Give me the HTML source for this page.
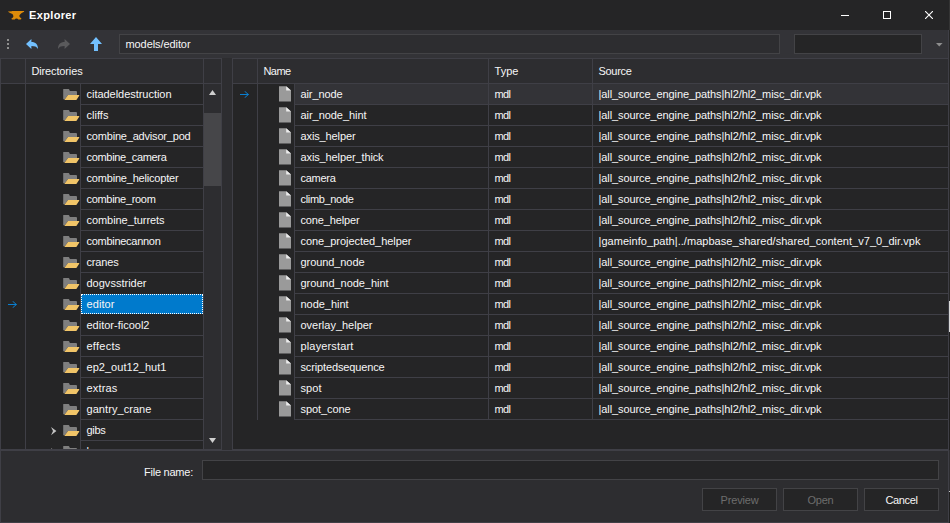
<!DOCTYPE html><html><head><meta charset="utf-8"><title>Explorer</title><style>
*{box-sizing:border-box;margin:0;padding:0}
html,body{width:950px;height:523px;overflow:hidden;background:#252526}
body{position:relative;font-family:"Liberation Sans",sans-serif;font-size:11px;color:#f6f6f6;cursor:default}
.a{position:absolute}
.t{position:absolute;white-space:nowrap;line-height:13px;height:13px}
#title{left:0;top:0;width:949px;height:30px;background:#252526}
#toolbar{left:0;top:30px;width:949px;height:28px;background:#333337}
.inp{position:absolute;border:1px solid #434346;background:#252526}
#tree{left:0;top:58px;width:222px;height:392px;background:#252526;border:1px solid #3f3f46;overflow:hidden}
#grid{left:232px;top:58px;width:717px;height:392px;background:#252526;border:1px solid #3f3f46;overflow:hidden}
#split{left:222px;top:58px;width:10px;height:392px;background:#2d2d30}
.hdr{position:absolute;top:0;height:25px;background:#2d2d30;border-bottom:1px solid #3f3f46;border-right:1px solid #3f3f46}
.hl{position:absolute;height:1px;background:#3f3f46}
.vl{position:absolute;width:1px;background:#3f3f46}
#panel{left:0;top:450px;width:949px;height:73px;background:#2d2d30;border:1px solid #3f3f46}
.btn{position:absolute;top:488px;width:75px;height:23px;border:1px solid #434346;background:#252526;text-align:center;line-height:20px;padding-top:1px}
.dis{color:#6d6d6d}
</style></head><body>
<div id="title" class="a">
<svg class="a" style="left:8px;top:10px" width="17" height="10" viewBox="0 0 17 10"><path transform="translate(0 0.75) scale(1 0.92)" d="M0 1.2L0.2 0.7L3.9 0.6V0.4H16.1V1.1C14 2.2 12.4 3.4 11.5 4.8C11.2 5.6 11.5 6.6 12.2 7.3L13.3 8.2V9L12.5 9.5H10.3L9.6 8.8Q8.4 8 7.4 8.8L6.8 9.5H4L3.3 8.8L4.6 7.6C5.4 6.8 5.6 6 5.2 5.2L4.5 3.6C2.8 3 1.2 2.2 0 1.2Z" fill="#de8c0a"/></svg>
<div class="t" style="left:29px;top:9px;font-weight:bold;color:#fff;letter-spacing:0.35px">Explorer</div>
<div class="a" style="left:841px;top:15px;width:8px;height:1px;background:#fff"></div>
<div class="a" style="left:883px;top:11px;width:8px;height:8px;border:1px solid #fff"></div>
<svg class="a" style="left:925px;top:11px" width="8" height="8" viewBox="0 0 8 8"><path d="M0 0L8 8M8 0L0 8" stroke="#fff" stroke-width="1.1" fill="none"/></svg>
</div>
<div id="toolbar" class="a">
<div class="a" style="left:7px;top:9px;width:2px;height:2px;background:#8f8f8f"></div>
<div class="a" style="left:7px;top:13px;width:2px;height:2px;background:#8f8f8f"></div>
<div class="a" style="left:7px;top:17px;width:2px;height:2px;background:#8f8f8f"></div>
<svg class="a" style="left:26px;top:9px" width="12" height="10" viewBox="0 0 12 10"><path d="M0 5L5.4 0V3C9.6 3 12 5.6 12 10C10.6 7.6 8.6 7 5.4 7V10Z" fill="#72c0ff"/></svg>
<svg class="a" style="left:58px;top:9px" width="12" height="10" viewBox="0 0 12 10"><path transform="translate(12 0) scale(-1 1)" d="M0 5L5.4 0V3C9.6 3 12 5.6 12 10C10.6 7.6 8.6 7 5.4 7V10Z" fill="#5a5a5c"/></svg>
<svg class="a" style="left:90px;top:7px" width="12" height="14" viewBox="0 0 12 14"><path d="M6 0L12 7H8V14H4V7H0Z" fill="#72c0ff"/></svg>
<div class="inp" style="left:119px;top:4px;width:661px;height:20px;background:#2d2d30"></div>
<div class="t" style="left:125.5px;top:8px;letter-spacing:-0.081px">models/editor</div>
<div class="inp" style="left:794px;top:4px;width:128px;height:20px"></div>
<svg class="a" style="left:936px;top:13px" width="7" height="4" viewBox="0 0 7 4"><path d="M0 0H6.6L3.3 3.4Z" fill="#8e8e8e"/></svg>
</div>
<div id="split" class="a"></div>
<div id="tree" class="a">
<div class="hdr" style="left:-1px;width:26px"></div>
<div class="hdr" style="left:25px;width:178px"></div>
<div class="hdr" style="left:203px;width:18px;border-right:0"></div>
<div class="t" style="left:30.5px;top:6px;letter-spacing:-0.143px">Directories</div>
<div class="vl" style="left:24px;top:25px;height:370px"></div>
<div class="vl" style="left:79px;top:25px;height:370px"></div>
<div class="vl" style="left:202px;top:25px;height:370px"></div>
<div class="a" style="left:203px;top:25px;width:17px;height:370px;background:#2d2d30"></div>
<div class="a" style="left:203px;top:54px;width:17px;height:73px;background:#464649"></div>
<svg class="a" style="left:208px;top:31px" width="7" height="5" viewBox="0 0 7 5"><path d="M3.5 0L7 5H0Z" fill="#cfcfcf"/></svg>
<svg class="a" style="left:208px;top:379px" width="7" height="5" viewBox="0 0 7 5"><path d="M0 0H7L3.5 5Z" fill="#cfcfcf"/></svg>
<div class="hl" style="left:80px;top:45px;width:122px"></div>
<svg class="a" style="left:62px;top:30px" width="17" height="12" viewBox="0 0 17 12"><path transform="translate(0 -0.4)" d="M0.2 0.9Q0.2 0.2 1 0.2H5Q5.8 0.2 6.2 1L6.9 2.4H13Q14 2.4 14 3.4V6.5H5L1.8 10.7H0.2Z" fill="#7f7f7f"/><path transform="translate(0 -0.4)" d="M5 6.4H15.8Q16.7 6.4 16.2 7.2L13.7 11Q13.4 11.5 12.8 11.5H1.3Z" fill="#f1c568"/></svg>
<div class="t" style="left:85.5px;top:29px;letter-spacing:-0.034px">citadeldestruction</div>
<div class="hl" style="left:80px;top:66px;width:122px"></div>
<svg class="a" style="left:62px;top:51px" width="17" height="12" viewBox="0 0 17 12"><path transform="translate(0 -0.4)" d="M0.2 0.9Q0.2 0.2 1 0.2H5Q5.8 0.2 6.2 1L6.9 2.4H13Q14 2.4 14 3.4V6.5H5L1.8 10.7H0.2Z" fill="#7f7f7f"/><path transform="translate(0 -0.4)" d="M5 6.4H15.8Q16.7 6.4 16.2 7.2L13.7 11Q13.4 11.5 12.8 11.5H1.3Z" fill="#f1c568"/></svg>
<div class="t" style="left:85.5px;top:50px;letter-spacing:0.031px">cliffs</div>
<div class="hl" style="left:80px;top:87px;width:122px"></div>
<svg class="a" style="left:62px;top:72px" width="17" height="12" viewBox="0 0 17 12"><path transform="translate(0 -0.4)" d="M0.2 0.9Q0.2 0.2 1 0.2H5Q5.8 0.2 6.2 1L6.9 2.4H13Q14 2.4 14 3.4V6.5H5L1.8 10.7H0.2Z" fill="#7f7f7f"/><path transform="translate(0 -0.4)" d="M5 6.4H15.8Q16.7 6.4 16.2 7.2L13.7 11Q13.4 11.5 12.8 11.5H1.3Z" fill="#f1c568"/></svg>
<div class="t" style="left:85.5px;top:71px;letter-spacing:-0.192px">combine_advisor_pod</div>
<div class="hl" style="left:80px;top:108px;width:122px"></div>
<svg class="a" style="left:62px;top:93px" width="17" height="12" viewBox="0 0 17 12"><path transform="translate(0 -0.4)" d="M0.2 0.9Q0.2 0.2 1 0.2H5Q5.8 0.2 6.2 1L6.9 2.4H13Q14 2.4 14 3.4V6.5H5L1.8 10.7H0.2Z" fill="#7f7f7f"/><path transform="translate(0 -0.4)" d="M5 6.4H15.8Q16.7 6.4 16.2 7.2L13.7 11Q13.4 11.5 12.8 11.5H1.3Z" fill="#f1c568"/></svg>
<div class="t" style="left:85.5px;top:92px;letter-spacing:-0.312px">combine_camera</div>
<div class="hl" style="left:80px;top:129px;width:122px"></div>
<svg class="a" style="left:62px;top:114px" width="17" height="12" viewBox="0 0 17 12"><path transform="translate(0 -0.4)" d="M0.2 0.9Q0.2 0.2 1 0.2H5Q5.8 0.2 6.2 1L6.9 2.4H13Q14 2.4 14 3.4V6.5H5L1.8 10.7H0.2Z" fill="#7f7f7f"/><path transform="translate(0 -0.4)" d="M5 6.4H15.8Q16.7 6.4 16.2 7.2L13.7 11Q13.4 11.5 12.8 11.5H1.3Z" fill="#f1c568"/></svg>
<div class="t" style="left:85.5px;top:113px;letter-spacing:-0.188px">combine_helicopter</div>
<div class="hl" style="left:80px;top:150px;width:122px"></div>
<svg class="a" style="left:62px;top:135px" width="17" height="12" viewBox="0 0 17 12"><path transform="translate(0 -0.4)" d="M0.2 0.9Q0.2 0.2 1 0.2H5Q5.8 0.2 6.2 1L6.9 2.4H13Q14 2.4 14 3.4V6.5H5L1.8 10.7H0.2Z" fill="#7f7f7f"/><path transform="translate(0 -0.4)" d="M5 6.4H15.8Q16.7 6.4 16.2 7.2L13.7 11Q13.4 11.5 12.8 11.5H1.3Z" fill="#f1c568"/></svg>
<div class="t" style="left:85.5px;top:134px;letter-spacing:-0.314px">combine_room</div>
<div class="hl" style="left:80px;top:171px;width:122px"></div>
<svg class="a" style="left:62px;top:156px" width="17" height="12" viewBox="0 0 17 12"><path transform="translate(0 -0.4)" d="M0.2 0.9Q0.2 0.2 1 0.2H5Q5.8 0.2 6.2 1L6.9 2.4H13Q14 2.4 14 3.4V6.5H5L1.8 10.7H0.2Z" fill="#7f7f7f"/><path transform="translate(0 -0.4)" d="M5 6.4H15.8Q16.7 6.4 16.2 7.2L13.7 11Q13.4 11.5 12.8 11.5H1.3Z" fill="#f1c568"/></svg>
<div class="t" style="left:85.5px;top:155px;letter-spacing:-0.058px">combine_turrets</div>
<div class="hl" style="left:80px;top:192px;width:122px"></div>
<svg class="a" style="left:62px;top:177px" width="17" height="12" viewBox="0 0 17 12"><path transform="translate(0 -0.4)" d="M0.2 0.9Q0.2 0.2 1 0.2H5Q5.8 0.2 6.2 1L6.9 2.4H13Q14 2.4 14 3.4V6.5H5L1.8 10.7H0.2Z" fill="#7f7f7f"/><path transform="translate(0 -0.4)" d="M5 6.4H15.8Q16.7 6.4 16.2 7.2L13.7 11Q13.4 11.5 12.8 11.5H1.3Z" fill="#f1c568"/></svg>
<div class="t" style="left:85.5px;top:176px;letter-spacing:-0.282px">combinecannon</div>
<div class="hl" style="left:80px;top:213px;width:122px"></div>
<svg class="a" style="left:62px;top:198px" width="17" height="12" viewBox="0 0 17 12"><path transform="translate(0 -0.4)" d="M0.2 0.9Q0.2 0.2 1 0.2H5Q5.8 0.2 6.2 1L6.9 2.4H13Q14 2.4 14 3.4V6.5H5L1.8 10.7H0.2Z" fill="#7f7f7f"/><path transform="translate(0 -0.4)" d="M5 6.4H15.8Q16.7 6.4 16.2 7.2L13.7 11Q13.4 11.5 12.8 11.5H1.3Z" fill="#f1c568"/></svg>
<div class="t" style="left:85.5px;top:197px;letter-spacing:-0.172px">cranes</div>
<svg class="a" style="left:62px;top:219px" width="17" height="12" viewBox="0 0 17 12"><path transform="translate(0 -0.4)" d="M0.2 0.9Q0.2 0.2 1 0.2H5Q5.8 0.2 6.2 1L6.9 2.4H13Q14 2.4 14 3.4V6.5H5L1.8 10.7H0.2Z" fill="#7f7f7f"/><path transform="translate(0 -0.4)" d="M5 6.4H15.8Q16.7 6.4 16.2 7.2L13.7 11Q13.4 11.5 12.8 11.5H1.3Z" fill="#f1c568"/></svg>
<div class="t" style="left:85.5px;top:218px;letter-spacing:0.007px">dogvsstrider</div>
<div class="a" style="left:80px;top:235px;width:122px;height:20px;background:#007acc;border:1px dotted #fff"></div>
<svg class="a" style="left:7px;top:242px" width="10" height="7" viewBox="0 0 10 7"><path d="M0 3.5H8.6M4.6 0.2L8.4 3.5L4.6 6.8" fill="none" stroke="#0a7fd0" stroke-width="1"/></svg>
<svg class="a" style="left:62px;top:240px" width="17" height="12" viewBox="0 0 17 12"><path transform="translate(0 -0.4)" d="M0.2 0.9Q0.2 0.2 1 0.2H5Q5.8 0.2 6.2 1L6.9 2.4H13Q14 2.4 14 3.4V6.5H5L1.8 10.7H0.2Z" fill="#7f7f7f"/><path transform="translate(0 -0.4)" d="M5 6.4H15.8Q16.7 6.4 16.2 7.2L13.7 11Q13.4 11.5 12.8 11.5H1.3Z" fill="#f1c568"/></svg>
<div class="t" style="left:85.5px;top:239px;letter-spacing:0.078px">editor</div>
<div class="hl" style="left:80px;top:276px;width:122px"></div>
<svg class="a" style="left:62px;top:261px" width="17" height="12" viewBox="0 0 17 12"><path transform="translate(0 -0.4)" d="M0.2 0.9Q0.2 0.2 1 0.2H5Q5.8 0.2 6.2 1L6.9 2.4H13Q14 2.4 14 3.4V6.5H5L1.8 10.7H0.2Z" fill="#7f7f7f"/><path transform="translate(0 -0.4)" d="M5 6.4H15.8Q16.7 6.4 16.2 7.2L13.7 11Q13.4 11.5 12.8 11.5H1.3Z" fill="#f1c568"/></svg>
<div class="t" style="left:85.5px;top:260px;letter-spacing:0.001px">editor-ficool2</div>
<div class="hl" style="left:80px;top:297px;width:122px"></div>
<svg class="a" style="left:62px;top:282px" width="17" height="12" viewBox="0 0 17 12"><path transform="translate(0 -0.4)" d="M0.2 0.9Q0.2 0.2 1 0.2H5Q5.8 0.2 6.2 1L6.9 2.4H13Q14 2.4 14 3.4V6.5H5L1.8 10.7H0.2Z" fill="#7f7f7f"/><path transform="translate(0 -0.4)" d="M5 6.4H15.8Q16.7 6.4 16.2 7.2L13.7 11Q13.4 11.5 12.8 11.5H1.3Z" fill="#f1c568"/></svg>
<div class="t" style="left:85.5px;top:281px;letter-spacing:0.254px">effects</div>
<div class="hl" style="left:80px;top:318px;width:122px"></div>
<svg class="a" style="left:62px;top:303px" width="17" height="12" viewBox="0 0 17 12"><path transform="translate(0 -0.4)" d="M0.2 0.9Q0.2 0.2 1 0.2H5Q5.8 0.2 6.2 1L6.9 2.4H13Q14 2.4 14 3.4V6.5H5L1.8 10.7H0.2Z" fill="#7f7f7f"/><path transform="translate(0 -0.4)" d="M5 6.4H15.8Q16.7 6.4 16.2 7.2L13.7 11Q13.4 11.5 12.8 11.5H1.3Z" fill="#f1c568"/></svg>
<div class="t" style="left:85.5px;top:302px;letter-spacing:0.033px">ep2_out12_hut1</div>
<div class="hl" style="left:80px;top:339px;width:122px"></div>
<svg class="a" style="left:62px;top:324px" width="17" height="12" viewBox="0 0 17 12"><path transform="translate(0 -0.4)" d="M0.2 0.9Q0.2 0.2 1 0.2H5Q5.8 0.2 6.2 1L6.9 2.4H13Q14 2.4 14 3.4V6.5H5L1.8 10.7H0.2Z" fill="#7f7f7f"/><path transform="translate(0 -0.4)" d="M5 6.4H15.8Q16.7 6.4 16.2 7.2L13.7 11Q13.4 11.5 12.8 11.5H1.3Z" fill="#f1c568"/></svg>
<div class="t" style="left:85.5px;top:323px;letter-spacing:0.172px">extras</div>
<div class="hl" style="left:80px;top:360px;width:122px"></div>
<svg class="a" style="left:62px;top:345px" width="17" height="12" viewBox="0 0 17 12"><path transform="translate(0 -0.4)" d="M0.2 0.9Q0.2 0.2 1 0.2H5Q5.8 0.2 6.2 1L6.9 2.4H13Q14 2.4 14 3.4V6.5H5L1.8 10.7H0.2Z" fill="#7f7f7f"/><path transform="translate(0 -0.4)" d="M5 6.4H15.8Q16.7 6.4 16.2 7.2L13.7 11Q13.4 11.5 12.8 11.5H1.3Z" fill="#f1c568"/></svg>
<div class="t" style="left:85.5px;top:344px;letter-spacing:0.065px">gantry_crane</div>
<div class="hl" style="left:80px;top:381px;width:122px"></div>
<svg class="a" style="left:62px;top:366px" width="17" height="12" viewBox="0 0 17 12"><path transform="translate(0 -0.4)" d="M0.2 0.9Q0.2 0.2 1 0.2H5Q5.8 0.2 6.2 1L6.9 2.4H13Q14 2.4 14 3.4V6.5H5L1.8 10.7H0.2Z" fill="#7f7f7f"/><path transform="translate(0 -0.4)" d="M5 6.4H15.8Q16.7 6.4 16.2 7.2L13.7 11Q13.4 11.5 12.8 11.5H1.3Z" fill="#f1c568"/></svg>
<svg class="a" style="left:49.6px;top:368px" width="6" height="9" viewBox="0 0 6 9"><path d="M0 0L5.4 4.1L0 8.2L2 4.1Z" fill="#c4c4c4"/></svg>
<div class="t" style="left:85.5px;top:365px;letter-spacing:-0.297px">gibs</div>
<div class="hl" style="left:80px;top:402px;width:122px"></div>
<svg class="a" style="left:62px;top:387px" width="17" height="12" viewBox="0 0 17 12"><path transform="translate(0 -0.4)" d="M0.2 0.9Q0.2 0.2 1 0.2H5Q5.8 0.2 6.2 1L6.9 2.4H13Q14 2.4 14 3.4V6.5H5L1.8 10.7H0.2Z" fill="#7f7f7f"/><path transform="translate(0 -0.4)" d="M5 6.4H15.8Q16.7 6.4 16.2 7.2L13.7 11Q13.4 11.5 12.8 11.5H1.3Z" fill="#f1c568"/></svg>
<svg class="a" style="left:49.6px;top:389px" width="6" height="9" viewBox="0 0 6 9"><path d="M0 0L5.4 4.1L0 8.2L2 4.1Z" fill="#c4c4c4"/></svg>
<div class="t" style="left:85.5px;top:386px;letter-spacing:-0.357px">humans</div>
</div>
<div id="grid" class="a">
<div class="hdr" style="left:-1px;width:26px"></div>
<div class="hdr" style="left:25px;width:231px"></div>
<div class="hdr" style="left:256px;width:104px"></div>
<div class="hdr" style="left:360px;width:356px;border-right:0"></div>
<div class="t" style="left:30.5px;top:6px;letter-spacing:-0.586px">Name</div>
<div class="t" style="left:261.5px;top:6px;letter-spacing:0.035px">Type</div>
<div class="t" style="left:365.5px;top:6px;letter-spacing:-0.310px">Source</div>
<div class="a" style="left:62px;top:25px;width:653px;height:20px;background:#333337"></div>
<div class="vl" style="left:24px;top:25px;height:336px"></div>
<div class="vl" style="left:61px;top:25px;height:336px"></div>
<div class="vl" style="left:255px;top:25px;height:336px"></div>
<div class="vl" style="left:359px;top:25px;height:336px"></div>
<svg class="a" style="left:7px;top:32px" width="10" height="7" viewBox="0 0 10 7"><path d="M0 3.5H8.6M4.6 0.2L8.4 3.5L4.6 6.8" fill="none" stroke="#0a7fd0" stroke-width="1"/></svg>
<div class="hl" style="left:61px;top:45px;width:654px"></div>
<svg class="a" style="left:46px;top:27px" width="12" height="16" viewBox="0 0 12 16"><path d="M0 0.2H7.2L12 4.6V15.6H0Z" fill="#9a9a9a"/><path d="M7.2 0.2L12 4.6H7.2Z" fill="#ececec"/></svg>
<div class="t" style="left:67.5px;top:29px;letter-spacing:-0.104px">air_node</div>
<div class="t" style="left:261.5px;top:29px;letter-spacing:-0.578px">mdl</div>
<div class="t" style="left:365.5px;top:29px;letter-spacing:-0.091px">|all_source_engine_paths|hl2/hl2_misc_dir.vpk</div>
<div class="hl" style="left:61px;top:66px;width:654px"></div>
<svg class="a" style="left:46px;top:48px" width="12" height="16" viewBox="0 0 12 16"><path d="M0 0.2H7.2L12 4.6V15.6H0Z" fill="#9a9a9a"/><path d="M7.2 0.2L12 4.6H7.2Z" fill="#ececec"/></svg>
<div class="t" style="left:67.5px;top:50px;letter-spacing:-0.052px">air_node_hint</div>
<div class="t" style="left:261.5px;top:50px;letter-spacing:-0.578px">mdl</div>
<div class="t" style="left:365.5px;top:50px;letter-spacing:-0.091px">|all_source_engine_paths|hl2/hl2_misc_dir.vpk</div>
<div class="hl" style="left:61px;top:87px;width:654px"></div>
<svg class="a" style="left:46px;top:69px" width="12" height="16" viewBox="0 0 12 16"><path d="M0 0.2H7.2L12 4.6V15.6H0Z" fill="#9a9a9a"/><path d="M7.2 0.2L12 4.6H7.2Z" fill="#ececec"/></svg>
<div class="t" style="left:67.5px;top:71px;letter-spacing:-0.115px">axis_helper</div>
<div class="t" style="left:261.5px;top:71px;letter-spacing:-0.578px">mdl</div>
<div class="t" style="left:365.5px;top:71px;letter-spacing:-0.091px">|all_source_engine_paths|hl2/hl2_misc_dir.vpk</div>
<div class="hl" style="left:61px;top:108px;width:654px"></div>
<svg class="a" style="left:46px;top:90px" width="12" height="16" viewBox="0 0 12 16"><path d="M0 0.2H7.2L12 4.6V15.6H0Z" fill="#9a9a9a"/><path d="M7.2 0.2L12 4.6H7.2Z" fill="#ececec"/></svg>
<div class="t" style="left:67.5px;top:92px;letter-spacing:-0.118px">axis_helper_thick</div>
<div class="t" style="left:261.5px;top:92px;letter-spacing:-0.578px">mdl</div>
<div class="t" style="left:365.5px;top:92px;letter-spacing:-0.091px">|all_source_engine_paths|hl2/hl2_misc_dir.vpk</div>
<div class="hl" style="left:61px;top:129px;width:654px"></div>
<svg class="a" style="left:46px;top:111px" width="12" height="16" viewBox="0 0 12 16"><path d="M0 0.2H7.2L12 4.6V15.6H0Z" fill="#9a9a9a"/><path d="M7.2 0.2L12 4.6H7.2Z" fill="#ececec"/></svg>
<div class="t" style="left:67.5px;top:113px;letter-spacing:-0.281px">camera</div>
<div class="t" style="left:261.5px;top:113px;letter-spacing:-0.578px">mdl</div>
<div class="t" style="left:365.5px;top:113px;letter-spacing:-0.091px">|all_source_engine_paths|hl2/hl2_misc_dir.vpk</div>
<div class="hl" style="left:61px;top:150px;width:654px"></div>
<svg class="a" style="left:46px;top:132px" width="12" height="16" viewBox="0 0 12 16"><path d="M0 0.2H7.2L12 4.6V15.6H0Z" fill="#9a9a9a"/><path d="M7.2 0.2L12 4.6H7.2Z" fill="#ececec"/></svg>
<div class="t" style="left:67.5px;top:134px;letter-spacing:-0.327px">climb_node</div>
<div class="t" style="left:261.5px;top:134px;letter-spacing:-0.578px">mdl</div>
<div class="t" style="left:365.5px;top:134px;letter-spacing:-0.091px">|all_source_engine_paths|hl2/hl2_misc_dir.vpk</div>
<div class="hl" style="left:61px;top:171px;width:654px"></div>
<svg class="a" style="left:46px;top:153px" width="12" height="16" viewBox="0 0 12 16"><path d="M0 0.2H7.2L12 4.6V15.6H0Z" fill="#9a9a9a"/><path d="M7.2 0.2L12 4.6H7.2Z" fill="#ececec"/></svg>
<div class="t" style="left:67.5px;top:155px;letter-spacing:-0.142px">cone_helper</div>
<div class="t" style="left:261.5px;top:155px;letter-spacing:-0.578px">mdl</div>
<div class="t" style="left:365.5px;top:155px;letter-spacing:-0.091px">|all_source_engine_paths|hl2/hl2_misc_dir.vpk</div>
<div class="hl" style="left:61px;top:192px;width:654px"></div>
<svg class="a" style="left:46px;top:174px" width="12" height="16" viewBox="0 0 12 16"><path d="M0 0.2H7.2L12 4.6V15.6H0Z" fill="#9a9a9a"/><path d="M7.2 0.2L12 4.6H7.2Z" fill="#ececec"/></svg>
<div class="t" style="left:67.5px;top:176px;letter-spacing:-0.044px">cone_projected_helper</div>
<div class="t" style="left:261.5px;top:176px;letter-spacing:-0.578px">mdl</div>
<div class="t" style="left:365.5px;top:176px;letter-spacing:0.043px">|gameinfo_path|../mapbase_shared/shared_content_v7_0_dir.vpk</div>
<div class="hl" style="left:61px;top:213px;width:654px"></div>
<svg class="a" style="left:46px;top:195px" width="12" height="16" viewBox="0 0 12 16"><path d="M0 0.2H7.2L12 4.6V15.6H0Z" fill="#9a9a9a"/><path d="M7.2 0.2L12 4.6H7.2Z" fill="#ececec"/></svg>
<div class="t" style="left:67.5px;top:197px;letter-spacing:-0.077px">ground_node</div>
<div class="t" style="left:261.5px;top:197px;letter-spacing:-0.578px">mdl</div>
<div class="t" style="left:365.5px;top:197px;letter-spacing:-0.091px">|all_source_engine_paths|hl2/hl2_misc_dir.vpk</div>
<div class="hl" style="left:61px;top:234px;width:654px"></div>
<svg class="a" style="left:46px;top:216px" width="12" height="16" viewBox="0 0 12 16"><path d="M0 0.2H7.2L12 4.6V15.6H0Z" fill="#9a9a9a"/><path d="M7.2 0.2L12 4.6H7.2Z" fill="#ececec"/></svg>
<div class="t" style="left:67.5px;top:218px;letter-spacing:-0.044px">ground_node_hint</div>
<div class="t" style="left:261.5px;top:218px;letter-spacing:-0.578px">mdl</div>
<div class="t" style="left:365.5px;top:218px;letter-spacing:-0.091px">|all_source_engine_paths|hl2/hl2_misc_dir.vpk</div>
<div class="hl" style="left:61px;top:255px;width:654px"></div>
<svg class="a" style="left:46px;top:237px" width="12" height="16" viewBox="0 0 12 16"><path d="M0 0.2H7.2L12 4.6V15.6H0Z" fill="#9a9a9a"/><path d="M7.2 0.2L12 4.6H7.2Z" fill="#ececec"/></svg>
<div class="t" style="left:67.5px;top:239px;letter-spacing:-0.036px">node_hint</div>
<div class="t" style="left:261.5px;top:239px;letter-spacing:-0.578px">mdl</div>
<div class="t" style="left:365.5px;top:239px;letter-spacing:-0.091px">|all_source_engine_paths|hl2/hl2_misc_dir.vpk</div>
<div class="hl" style="left:61px;top:276px;width:654px"></div>
<svg class="a" style="left:46px;top:258px" width="12" height="16" viewBox="0 0 12 16"><path d="M0 0.2H7.2L12 4.6V15.6H0Z" fill="#9a9a9a"/><path d="M7.2 0.2L12 4.6H7.2Z" fill="#ececec"/></svg>
<div class="t" style="left:67.5px;top:260px;letter-spacing:-0.011px">overlay_helper</div>
<div class="t" style="left:261.5px;top:260px;letter-spacing:-0.578px">mdl</div>
<div class="t" style="left:365.5px;top:260px;letter-spacing:-0.091px">|all_source_engine_paths|hl2/hl2_misc_dir.vpk</div>
<div class="hl" style="left:61px;top:297px;width:654px"></div>
<svg class="a" style="left:46px;top:279px" width="12" height="16" viewBox="0 0 12 16"><path d="M0 0.2H7.2L12 4.6V15.6H0Z" fill="#9a9a9a"/><path d="M7.2 0.2L12 4.6H7.2Z" fill="#ececec"/></svg>
<div class="t" style="left:67.5px;top:281px;letter-spacing:0.149px">playerstart</div>
<div class="t" style="left:261.5px;top:281px;letter-spacing:-0.578px">mdl</div>
<div class="t" style="left:365.5px;top:281px;letter-spacing:-0.091px">|all_source_engine_paths|hl2/hl2_misc_dir.vpk</div>
<div class="hl" style="left:61px;top:318px;width:654px"></div>
<svg class="a" style="left:46px;top:300px" width="12" height="16" viewBox="0 0 12 16"><path d="M0 0.2H7.2L12 4.6V15.6H0Z" fill="#9a9a9a"/><path d="M7.2 0.2L12 4.6H7.2Z" fill="#ececec"/></svg>
<div class="t" style="left:67.5px;top:302px;letter-spacing:-0.140px">scriptedsequence</div>
<div class="t" style="left:261.5px;top:302px;letter-spacing:-0.578px">mdl</div>
<div class="t" style="left:365.5px;top:302px;letter-spacing:-0.091px">|all_source_engine_paths|hl2/hl2_misc_dir.vpk</div>
<div class="hl" style="left:61px;top:339px;width:654px"></div>
<svg class="a" style="left:46px;top:321px" width="12" height="16" viewBox="0 0 12 16"><path d="M0 0.2H7.2L12 4.6V15.6H0Z" fill="#9a9a9a"/><path d="M7.2 0.2L12 4.6H7.2Z" fill="#ececec"/></svg>
<div class="t" style="left:67.5px;top:323px;letter-spacing:0.051px">spot</div>
<div class="t" style="left:261.5px;top:323px;letter-spacing:-0.578px">mdl</div>
<div class="t" style="left:365.5px;top:323px;letter-spacing:-0.091px">|all_source_engine_paths|hl2/hl2_misc_dir.vpk</div>
<div class="hl" style="left:61px;top:360px;width:654px"></div>
<svg class="a" style="left:46px;top:342px" width="12" height="16" viewBox="0 0 12 16"><path d="M0 0.2H7.2L12 4.6V15.6H0Z" fill="#9a9a9a"/><path d="M7.2 0.2L12 4.6H7.2Z" fill="#ececec"/></svg>
<div class="t" style="left:67.5px;top:344px;letter-spacing:-0.085px">spot_cone</div>
<div class="t" style="left:261.5px;top:344px;letter-spacing:-0.578px">mdl</div>
<div class="t" style="left:365.5px;top:344px;letter-spacing:-0.091px">|all_source_engine_paths|hl2/hl2_misc_dir.vpk</div>
</div>
<div id="panel" class="a"></div>
<div class="t" style="left:144.0px;top:466px;letter-spacing:-0.236px">File name:</div>
<div class="inp" style="left:202px;top:460px;width:737px;height:20px"></div>
<div class="btn dis" style="left:702px;letter-spacing:-0.161px">Preview</div>
<div class="btn dis" style="left:783px;letter-spacing:-0.230px">Open</div>
<div class="btn" style="left:864px;letter-spacing:-0.375px">Cancel</div>
<div class="a" style="left:949px;top:0;width:1px;height:523px;background:#1f1f1f"></div>
<div class="a" style="left:949px;top:0;width:1px;height:30px;background:#343434"></div>
<div class="a" style="left:949px;top:30px;width:1px;height:271px;background:#262626"></div>
<div class="a" style="left:948px;top:30px;width:1px;height:28px;background:#3f3f46"></div>
<div class="a" style="left:949px;top:450px;width:1px;height:41px;background:#2d2d30"></div>
<div class="a" style="left:949px;top:491px;width:1px;height:1px;background:#c8c8c8"></div>
<div class="a" style="left:949px;top:301px;width:1px;height:31px;background:#d8d8d8"></div>
</body></html>
